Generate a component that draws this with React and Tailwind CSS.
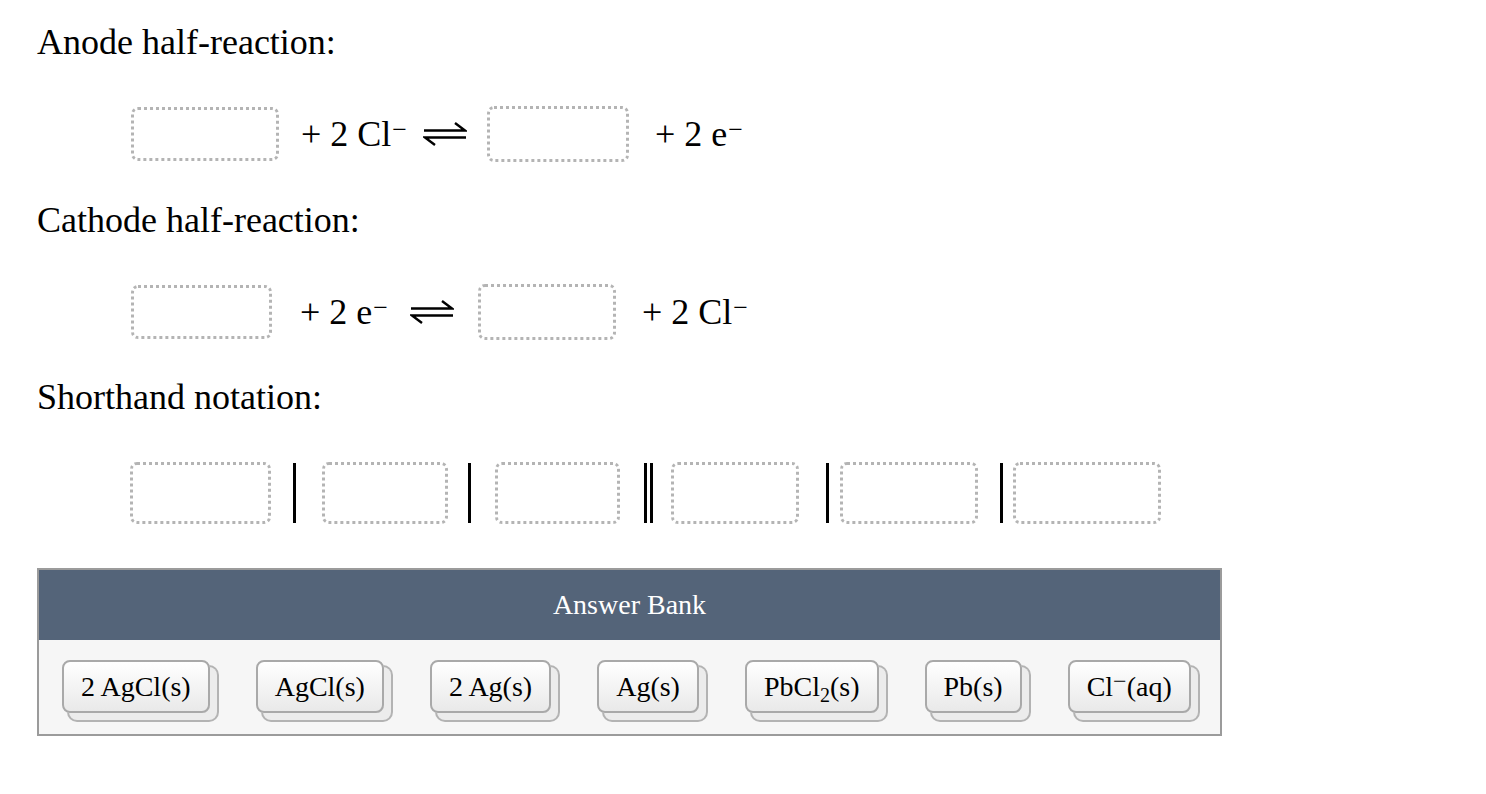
import React from 'react';

const serif = { fontFamily: '"Liberation Serif", "Times New Roman", serif' };

function Slot({ w = 'w-[146px]', h = 'h-[55px]' }) {
  return <div className={`${w} ${h} border-[3px] border-dotted border-[#b4b4b4] rounded-[7px] shrink-0`} />;
}

function Equil() {
  return (
    <svg width="44" height="26" viewBox="0 0 44 26" className="shrink-0">
      <path d="M1 9.5 H42 L32 2" fill="none" stroke="#000" strokeWidth="2.4" strokeLinejoin="miter" />
      <path d="M43 16.5 H2 L12 24" fill="none" stroke="#000" strokeWidth="2.4" strokeLinejoin="miter" />
    </svg>
  );
}

function Minus() {
  return <sup className="text-[26px] relative -top-[8px] ml-[1px]">−</sup>;
}

function Bar() {
  return <div className="w-[3px] h-[60px] bg-black shrink-0" />;
}

function Chip({ children }) {
  return (
    <button className="h-[53px] px-[17px] border-2 border-[#a9a9a9] rounded-[8px] bg-gradient-to-b from-white to-[#e9e9e9] text-[28px] leading-none text-black shadow-[7px_7px_0_0_#ececec,7px_7px_0_2px_#b3b3b3] shrink-0">
      {children}
    </button>
  );
}

export default function App() {
  return (
    <div className="bg-white min-h-screen pl-[37px] pt-[24px] text-black" style={serif}>
      {/* Anode */}
      <div className="text-[36px] leading-[36px]">Anode half-reaction:</div>
      <div className="mt-[46px] pl-[94px] h-[56px] flex items-center text-[36px] leading-none">
        <Slot w="w-[148px]" h="h-[54px]" />
        <span className="ml-[22px]">+ 2 Cl<Minus /></span>
        <span className="ml-[16px]"><Equil /></span>
        <span className="ml-[20px]"><Slot w="w-[142px]" h="h-[56px]" /></span>
        <span className="ml-[26px]">+ 2 e<Minus /></span>
      </div>

      {/* Cathode */}
      <div className="mt-[40px] text-[36px] leading-[36px]">Cathode half-reaction:</div>
      <div className="mt-[46px] pl-[94px] h-[56px] flex items-center text-[36px] leading-none">
        <Slot w="w-[141px]" h="h-[54px]" />
        <span className="ml-[28px]">+ 2 e<Minus /></span>
        <span className="ml-[22px]"><Equil /></span>
        <span className="ml-[24px]"><Slot w="w-[138px]" h="h-[56px]" /></span>
        <span className="ml-[26px]">+ 2 Cl<Minus /></span>
      </div>

      {/* Shorthand */}
      <div className="mt-[39px] text-[36px] leading-[36px]">Shorthand notation:</div>
      <div className="mt-[47px] pl-[93px] h-[62px] flex items-center">
        <Slot w="w-[141px]" h="h-[62px]" />
        <div className="ml-[22px]"><Bar /></div>
        <div className="ml-[26px]"><Slot w="w-[126px]" h="h-[62px]" /></div>
        <div className="ml-[20px]"><Bar /></div>
        <div className="ml-[24px]"><Slot w="w-[125px]" h="h-[62px]" /></div>
        <div className="ml-[24px] flex gap-[3px]"><Bar /><Bar /></div>
        <div className="ml-[18px]"><Slot w="w-[128px]" h="h-[62px]" /></div>
        <div className="ml-[27px]"><Bar /></div>
        <div className="ml-[11px]"><Slot w="w-[138px]" h="h-[62px]" /></div>
        <div className="ml-[22px]"><Bar /></div>
        <div className="ml-[10px]"><Slot w="w-[148px]" h="h-[62px]" /></div>
      </div>

      {/* Answer bank */}
      <div className="mt-[44px] w-[1185px] border-2 border-[#9b9b9b]">
        <div className="h-[70px] bg-[#546479] flex items-center justify-center text-white text-[28px]">
          Answer Bank
        </div>
        <div className="h-[94px] bg-[#f6f6f6] flex items-start pt-[20px] pl-[23px] gap-[46px]">
          <Chip>2 AgCl(s)</Chip>
          <Chip>AgCl(s)</Chip>
          <Chip>2 Ag(s)</Chip>
          <Chip>Ag(s)</Chip>
          <Chip>PbCl<sub className="text-[20px] relative top-[6px]">2</sub>(s)</Chip>
          <Chip>Pb(s)</Chip>
          <Chip>Cl<sup className="text-[24px] relative -top-[7px]">−</sup>(aq)</Chip>
        </div>
      </div>
    </div>
  );
}
